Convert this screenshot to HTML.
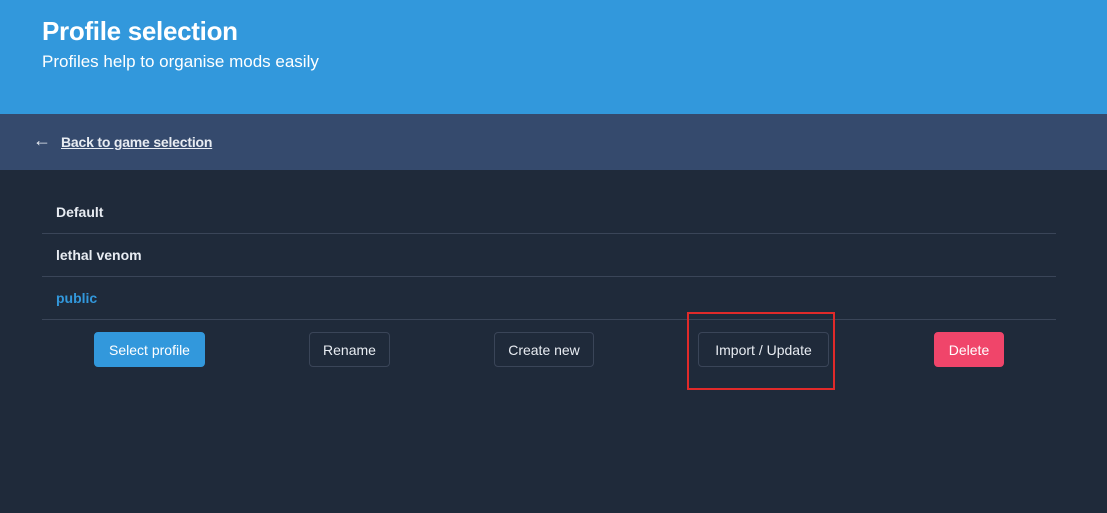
<!DOCTYPE html>
<html><head><style>
*{margin:0;padding:0;box-sizing:border-box}
body{width:1107px;height:513px;background:#1f2a3a;font-family:"Liberation Sans",sans-serif;overflow:hidden;position:relative}
.hero{position:absolute;left:0;top:0;width:1107px;height:114px;background:#3298dc}
.hero h1{position:absolute;left:42px;top:16px;font-size:26px;font-weight:bold;color:#fff;letter-spacing:-0.3px}
.hero p{position:absolute;left:42px;top:52px;font-size:17px;color:#fff}
.bar{position:absolute;left:0;top:114px;width:1107px;height:56px;background:#354a6d}
.bar span{position:absolute;top:20px;font-size:14px;color:#e8ecf2;font-weight:bold}
.row{position:absolute;left:42px;width:1014px;height:43px;border-bottom:1px solid #3a4558}
.row span{position:absolute;left:14px;top:13px;font-size:14px;font-weight:bold;color:#e8ecf2}
.btn{position:absolute;top:332px;height:35px;border:1px solid #3a4558;border-radius:4px;color:#e8ecf2;font-size:14px;display:flex;align-items:center;justify-content:center}
</style></head><body>
<div class="hero"><h1>Profile selection</h1><p>Profiles help to organise mods easily</p></div>
<div class="bar"><span style="left:33px;top:16px;font-size:18px">&#8592;</span><span style="left:61px;text-decoration:underline;letter-spacing:-0.2px">Back to game selection</span></div>
<div class="row" style="top:191px"><span>Default</span></div>
<div class="row" style="top:234px"><span>lethal venom</span></div>
<div class="row" style="top:277px"><span style="color:#3298dc">public</span></div>
<div class="btn" style="left:94px;width:111px;background:#3298dc;border-color:#3298dc;color:#fff">Select profile</div>
<div class="btn" style="left:309px;width:81px">Rename</div>
<div class="btn" style="left:494px;width:100px">Create new</div>
<div class="btn" style="left:698px;width:131px">Import / Update</div>
<div style="position:absolute;left:687px;top:312px;width:148px;height:78px;border:2px solid #e02a2a"></div>
<div class="btn" style="left:934px;width:70px;background:#f0456a;border-color:#f0456a;color:#fff">Delete</div>
</body></html>
